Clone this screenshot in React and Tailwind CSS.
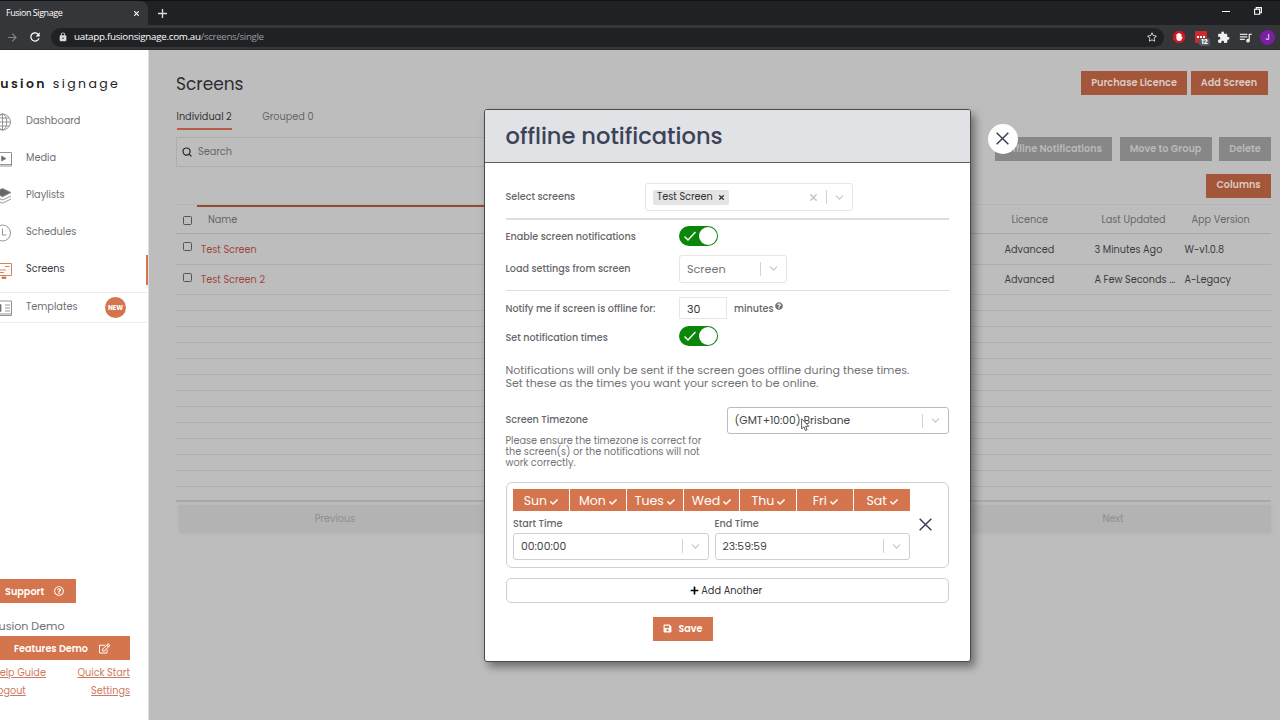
import React from 'react';
import { ChevronDown } from 'lucide-react';
import { FaCheck, FaPlus, FaQuestionCircle, FaRegEdit, FaRegQuestionCircle, FaRegStar, FaSave } from 'react-icons/fa';
import { MdArrowForward, MdExtension, MdLock, MdQueueMusic, MdRefresh } from 'react-icons/md';

const NAV = [
  { label: 'Dashboard', icon: 'globe' },
  { label: 'Media', icon: 'media' },
  { label: 'Playlists', icon: 'layers' },
  { label: 'Schedules', icon: 'clock' },
  { label: 'Screens', icon: 'screen', active: true },
];

const DAYS = ['Sun', 'Mon', 'Tues', 'Wed', 'Thu', 'Fri', 'Sat'];

const ROWS = [
  { name: 'Test Screen', licence: 'Advanced', updated: '3 Minutes Ago', version: 'W-v1.0.8' },
  { name: 'Test Screen 2', licence: 'Advanced', updated: 'A Few Seconds ...', version: 'A-Legacy' },
];

const Cross = ({ className = '', width = 1.5 }) => (
  <svg className={className} viewBox="0 0 14 14" fill="none" stroke="currentColor" strokeWidth={width}>
    <path d="M.7.7l12.6 12.6M13.3.7L.7 13.3" />
  </svg>
);

const NavIcon = ({ name }) => (
  <svg className="w-[19px] h-[18px] shrink-0" viewBox="0 0 19 18" fill="none" stroke="#8a8a8f" strokeWidth="0.9">
    {name === 'globe' && (
      <>
        <circle cx="9.5" cy="9" r="8" />
        <ellipse cx="9.5" cy="9" rx="4.2" ry="8" />
        <path d="M9.5 1v16M3 5h13M3 13h13M1.5 9h16" />
      </>
    )}
    {name === 'media' && (
      <>
        <path d="M.5 2.5h18v12H.5zM1.5 16h17.2V4" />
        <path d="M8.5 6v5L13 8.500z" fill="#66666c" />
      </>
    )}
    {name === 'layers' && (
      <>
        <path d="M9.5 1.5l8.5 4-8.5 4.3L1 5.5z" fill="#66666c" />
        <path d="M1 9l8.5 4L18 9M1 12l8.5 4.2L18 12" />
      </>
    )}
    {name === 'clock' && (
      <>
        <circle cx="9.5" cy="9" r="8" />
        <path d="M9.5 4.5V11h4" />
      </>
    )}
    {name === 'screen' && (
      <g stroke="#d4754d">
        <path d="M.5 2.5h18v12H.5zM12 5.5h4.5M4 9h9M4 11.5h7" />
        <path d="M9 16h4v1.5H9z" fill="#d4754d" />
      </g>
    )}
    {name === 'templates' && (
      <>
        <path d="M.5 2h18v13H.5zM1.5 16.5h17.2V4M12 6h5M12 9h5M12 12h5" />
        <path d="M4 5.5h4v7H4z" fill="#55555b" />
      </>
    )}
  </svg>
);

const BrowserBar = () => (
  <header className="h-[50px] shrink-0 bg-[#35363a] border-b border-[#2a2b2e] text-white">
    <div className="h-[25px] flex items-center bg-[#202124] border-t border-[#101113]">
      <div className="h-full w-[148px] flex items-center justify-between bg-[#35363a] rounded-tr-lg pl-1.5 pr-[9px]">
        <span className="text-[9px] font-['Open_Sans',sans-serif] tracking-[-0.45px]">Fusion Signage</span>
        <Cross className="w-[5px] h-[5px]" width={3.2} />
      </div>
      <svg className="w-[9px] h-[9px] ml-[10px]" viewBox="0 0 8 8" stroke="#dcdcdc" strokeWidth="1.2"><path d="M4 0v8M0 4h8" /></svg>
      <div className="ml-auto mr-[18px] flex items-center gap-[24px] mb-[4px]">
        <svg className="w-2 h-2" viewBox="0 0 8 8" stroke="#fff"><path d="M0 4.5h8" /></svg>
        <svg className="w-2 h-2" viewBox="0 0 8 8" fill="none" stroke="#fff" strokeWidth="1.1"><path d="M.6 2.2h5v5h-5zM2.2 2V.6h5.2v5.2H6" /></svg>
      </div>
    </div>
    <div className="h-6 flex items-center">
      <MdArrowForward className="ml-[6px] w-[13px] h-[13px] text-[#85868a]" />
      <MdRefresh className="ml-[9px] w-[14px] h-[14px]" />
      <div className="ml-[9px] w-[1113px] h-[19px] rounded-full bg-[#202124] flex items-center pl-[7px] pr-[7px]">
        <MdLock className="w-[10px] h-[10px] text-[#dadada]" />
        <span className="ml-[6px] text-[9.8px] font-['Open_Sans',sans-serif] tracking-[-0.28px]">
          uatapp.fusionsignage.com.au<span className="text-[#9a9ba0] tracking-[-0.38px]">/screens/single</span>
        </span>
        <FaRegStar className="ml-auto w-[10px] h-[10px] text-[#dadada]" />
      </div>
      <svg className="ml-[9px] w-3 h-3" viewBox="0 0 12 12">
        <path d="M3.5 0h5L12 3.5v5L8.5 12h-5L0 8.5v-5z" fill="#d3161d" />
        <path d="M3.4 3.2h1V2.5h1V2h1.100v.5h1v.7h1v3l.6-.5.6.5L8 9.800H4.600L3.400 8z" fill="#fff" />
      </svg>
      <div className="relative ml-[10px] w-3 h-3 rounded-[1px] bg-[#cb2b2b] flex justify-center items-center gap-px">
        <i className="size-[2px] bg-white" /><i className="size-[2px] bg-white" /><i className="size-[2px] bg-white" />
        <span className="absolute left-1 top-[7px] w-[11px] h-2 rounded-[2px] bg-[#55585d] text-[7px] leading-2 font-bold text-center">12</span>
      </div>
      <MdExtension className="ml-[10px] w-[13px] h-[13px] text-[#f0f0f0]" />
      <MdQueueMusic className="ml-[8px] w-[15px] h-[15px] text-[#e6e6e6]" />
      <div className="ml-[7px] w-[15px] h-[15px] shrink-0 rounded-full bg-[#7b1fa2] text-[8px] leading-[15px] text-center">J</div>
    </div>
  </header>
);

const Sidebar = () => (
  <aside className="w-[149px] shrink-0 overflow-hidden border-r border-[#dedede] bg-white text-[#6f6f73] text-[9.75px]">
    <div className="h-[53px] pt-[21px] -ml-[6.5px] leading-[25px] text-[12.5px] tracking-[2.4px] text-[#222] whitespace-nowrap">
      <b className="font-semibold">fusion</b> signage
    </div>
    <nav className="flex flex-col">
      {NAV.map((item) => (
        <a key={item.label} className="h-[37px] flex items-center">
          <span className="-ml-[7px] mr-[14px]"><NavIcon name={item.icon} /></span>
          <span className={item.active ? 'pb-px text-[#3a3a42]' : 'pb-px'}>{item.label}</span>
          {item.active && <i className="ml-auto w-[2px] h-[30px] bg-[#d4754d]" />}
        </a>
      ))}
      <a className="mt-[4px] mr-px h-[31px] flex items-center border-y border-[#ececec]">
        <span className="-ml-[7px] mr-[14px]"><NavIcon name="templates" /></span>
        <span>Templates</span>
        <span className="ml-auto mr-[21px] size-[21px] rounded-full bg-[#d4754d] text-white text-[6.5px] leading-[21px] text-center font-bold">NEW</span>
      </a>
    </nav>
    <div className="mt-[256px] w-[76px] h-6 bg-[#d4754d] text-white font-semibold flex items-center pl-[5px] text-[9.7px]">
      <span className="pt-[2px]">Support</span> <FaRegQuestionCircle className="ml-auto mr-3 w-[10px] h-[10px]" />
    </div>
    <div className="mt-[13px] h-5 leading-[21px] -ml-[7px] text-[11.1px] whitespace-nowrap">Fusion Demo</div>
    <div className="w-[130px] h-6 bg-[#d4754d] text-white font-semibold flex items-center pl-[14px] text-[9.6px]">
      <span className="pt-[2px]">Features Demo</span> <FaRegEdit className="ml-auto mr-[20px] w-[11px] h-[11px]" />
    </div>
    <div className="mt-[4px] w-[137px] -ml-[7px] flex flex-col text-[#cd7a60] text-[9.7px] leading-[18px] underline">
      <div className="flex justify-between"><a>Help Guide</a><a>Quick Start</a></div>
      <div className="flex justify-between"><a>Logout</a><a>Settings</a></div>
    </div>
  </aside>
);

const Screens = () => (
  <main className="grow bg-[#bdbdbd] pl-[27px] pr-[9px] pt-5 text-[9.7px] text-[#66666a]">
    <div className="h-[25px] pr-[3.5px] flex items-center text-[9.7px] text-[#dcc9c1] font-semibold">
      <h1 className="mr-auto pt-[4px] text-[17px] font-normal text-[#2c2c33]">Screens</h1>
      <button className="w-[106px] h-6 pt-px bg-[#a3563a]">Purchase Licence</button>
      <button className="ml-[3.5px] w-[77px] h-6 pt-px bg-[#a3563a]">Add Screen</button>
    </div>
    <div className="mt-[12px] h-[23px] flex gap-[30.5px] leading-[19px] pl-[0.5px]">
      <span className="border-b-2 border-[#b85f41] text-[#333338]">Individual 2</span>
      <span>Grouped 0</span>
    </div>
    <div className="mt-[7px] h-[30px] flex items-start gap-2">
      <div className="w-[600px] h-[30px] border border-[#adadad] flex items-center pl-[5px]">
        <svg className="w-[10px] h-[10px] mr-[6px]" viewBox="0 0 11 11" fill="none" stroke="#222" strokeWidth="1.3"><circle cx="5" cy="5" r="3.9" /><path d="M8 8l2.4 2.4" /></svg>
        Search
      </div>
      <div className="ml-auto flex gap-[7.5px] text-[9.7px] font-semibold text-[#b9b9b9]">
        <button className="w-[117px] h-6 pt-px bg-[#878787]">Offline Notifications</button>
        <button className="w-[92px] h-6 pt-px bg-[#878787]">Move to Group</button>
        <button className="w-[52px] h-6 pt-px bg-[#878787]">Delete</button>
      </div>
    </div>
    <div className="mt-[6.5px] flex justify-end">
      <button className="w-[65px] h-6 bg-[#a3563a] text-[9.6px] text-[#dcc9c1] font-semibold">Columns</button>
    </div>
    <section className="mt-[6.5px] border-t border-[#b5b5b5]">
      <div className="ml-[21px] mr-[480px] h-[2px] bg-[#934a32]" />
      <div className="h-[27px] flex items-center border-b border-[#a6a6a6]">
        <i className="ml-[7px] size-[9px] rounded-[1.5px] border border-[#555]" />
        <span className="ml-[16px] w-[803.5px]">Name</span>
        <span className="w-[90px]">Licence</span>
        <span className="w-[90px]">Last Updated</span>
        <span>App Version</span>
      </div>
      {ROWS.map((row) => (
        <div key={row.name} className="h-[30.5px] flex items-center border-b border-[#adadad] text-[#3c3c42]">
          <i className="ml-[7px] mb-[4px] size-[9px] rounded-[1.5px] border border-[#555]" />
          <span className="pt-[3px] ml-[9px] w-[803.5px] text-[#a0483c]">{row.name}</span>
          <span className="pt-[3px] w-[90px]">{row.licence}</span>
          <span className="pt-[3px] w-[90px] whitespace-nowrap">{row.updated}</span>
          <span className="pt-[3px]">{row.version}</span>
        </div>
      ))}
      {Array.from({ length: 12 }).map((_, i) => (
        <div key={i} className="h-4 border-b border-[#adadad]" />
      ))}
      <div className="h-[15px] border-b-2 border-[#a9a9a9]" />
      <div className="mt-[3px] flex justify-between text-[#8e8e8e] text-center leading-[28px]">
        <span className="ml-[3px] w-[312px] h-7 bg-[#b3b3b3] shadow-[0_0_4px_#b3b3b3]">Previous</span>
        <span className="w-[316px] h-7 bg-[#b3b3b3] shadow-[0_0_4px_#b3b3b3]">Next</span>
      </div>
    </section>
  </main>
);

const Select = ({ className = '', children, clearable }) => (
  <div className={`flex items-center rounded-[3px] border bg-white ${className}`}>
    {children}
    {clearable && <Cross className="ml-auto mr-[9px] w-[7px] h-[7px] text-[#c4c4c4]" width={3} />}
    <i className={`${clearable ? '' : 'ml-auto'} w-px h-[14px] bg-[#d3d3d3]`} />
    <ChevronDown className="mx-[6px] w-[13px] h-[13px] text-[#c4c4c4]" />
  </div>
);

const Toggle = () => (
  <div className="w-[39px] h-5 rounded-full bg-[#0a860a] p-px flex items-center">
    <svg className="ml-1 w-[12px] h-[10px]" viewBox="0 0 12 10" fill="none" stroke="#fff" strokeWidth="1.4"><path d="M.5 5.5L4 9l7.5-8" /></svg>
    <i className="ml-auto size-[18px] rounded-full bg-white" />
  </div>
);

const Label = ({ className = '', children }) => (
  <span className={`text-[9.6px] font-medium text-[#66666a] ${className}`}>{children}</span>
);

const NotificationsModal = () => (
  <div className="absolute left-[484px] top-[109px] w-[487px] h-[553px] flex flex-col rounded-[3px] border border-[#4a4a4e] bg-white text-[#737377] shadow-[4px_5px_8px_rgba(0,0,0,0.42)]">
    <h2 className="h-[53px] shrink-0 rounded-t-[2px] pl-[20.5px] leading-[52px] border-b border-[#5c5f66] bg-[#e0e2e6] text-[22.6px] font-medium text-[#3b4358]">offline notifications</h2>
    <div className="pl-[20.5px] pr-[21px] flex flex-col">
      <div className="mt-5 h-7 flex items-center">
        <Label className="w-[139.5px]">Select screens</Label>
        <Select clearable className="w-[208px] h-7 border-[#e6e6e6]">
          <span className="ml-[7px] w-[76px] h-[15px] rounded-[2px] bg-[#e4e4e4] flex items-center pl-[4px] pt-px text-[9.7px] text-[#333]">
            Test Screen <Cross className="ml-auto mr-[5px] w-[5px] h-[5px]" width={3.5} />
          </span>
        </Select>
      </div>
      <hr className="mt-[7px] border-0 h-[1.5px] bg-[#dcdcdc]" />
      <div className="mt-[6px] h-5 flex items-center">
        <Label className="w-[173.5px] pt-[4px]">Enable screen notifications</Label>
        <Toggle />
      </div>
      <div className="mt-[9px] h-7 flex items-center">
        <Label className="w-[173.5px] pt-px">Load settings from screen</Label>
        <Select className="w-[108px] h-7 border-[#e6e6e6]"><span className="pl-[7px] pt-px text-[11.2px]">Screen</span></Select>
      </div>
      <hr className="mt-[7px] border-0 h-[1.5px] bg-[#dcdcdc]" />
      <div className="mt-[6px] h-[22px] flex items-center">
        <Label className="w-[173.5px] pt-[2px]">Notify me if screen is offline for:</Label>
        <span className="w-[48px] h-[22px] border border-[#e6e6e6] pl-[7px] leading-[22px] text-[11px] text-[#333]">30</span>
        <Label className="ml-[7px] pt-[2px]">minutes</Label>
        <FaQuestionCircle className="ml-px mb-[5px] w-[8px] h-[8px]" />
      </div>
      <div className="mt-[7px] h-5 flex items-center">
        <Label className="w-[173.5px] pt-[4px]">Set notification times</Label>
        <Toggle />
      </div>
      <p className="mt-[18px] mb-px text-[11.04px] leading-[12.5px] whitespace-nowrap">
        Notifications will only be sent if the screen goes offline during these times.<br />
        Set these as the times you want your screen to be online.
      </p>
      <div className="mt-[17px] h-[27px] flex items-center justify-between">
        <Label>Screen Timezone</Label>
        <Select className="w-[222px] h-[27px] border-[#bcbcbc]"><span className="pl-[6.5px] pt-px text-[10.7px] text-[#444]">(GMT+10:00) Brisbane</span></Select>
      </div>
      <p className="mt-[1px] text-[9.7px] leading-[11.2px] whitespace-nowrap">
        Please ensure the timezone is correct for<br />
        the screen(s) or the notifications will not<br />
        work correctly.
      </p>
      <div className="mt-[13px] h-[86px] flex rounded-md border border-[#d0d0d4] pl-[6.5px] pt-[6px]">
        <div className="w-[397px]">
          <div className="flex gap-px">
            {DAYS.map((day) => (
              <span key={day} className="flex-1 h-[22px] pt-[3px] bg-[#d4754d] text-white text-[12.5px] flex items-center justify-center gap-[3px]">
                {day} <FaCheck className="mt-[1px] w-2 h-2" />
              </span>
            ))}
          </div>
          <div className="flex gap-[6px]">
            {[['Start Time', '00:00:00'], ['End Time', '23:59:59']].map(([label, value]) => (
              <div key={label} className="flex-1">
                <div className="h-[22px] leading-[21px]"><Label>{label}</Label></div>
                <Select className="h-[27px] border-[#cfcfcf]"><span className="pl-[7px] pt-px text-[10.8px] text-[#444]">{value}</span></Select>
              </div>
            ))}
          </div>
        </div>
        <Cross className="ml-[9px] mt-[29px] w-[13px] h-[13px] text-[#333a4c]" />
      </div>
      <button className="mt-[10px] h-[25px] flex items-center justify-center gap-[2px] rounded-[5px] border border-[#d0d0d4] pr-[2px] text-[9.75px] text-[#333]">
        <FaPlus className="w-[9px] h-[9px] text-black" /> <span className="pt-[2px]">Add Another</span>
      </button>
      <button className="mt-[14px] ml-[147.5px] w-[60px] h-6 flex items-center justify-center gap-[6px] bg-[#d4754d] text-white text-[9.6px] font-semibold">
        <FaSave className="w-[9px] h-[9px]" /> <span className="pt-[2px]">Save</span>
      </button>
    </div>
  </div>
);

const App = () => (
  <div className="relative w-[1280px] h-[720px] overflow-hidden flex flex-col font-[Poppins,Inter,sans-serif]">
    <BrowserBar />
    <div className="grow flex">
      <Sidebar />
      <Screens />
    </div>
    <NotificationsModal />
    <button className="absolute left-[987.5px] top-[123.5px] size-[30px] rounded-full bg-white flex items-center justify-center">
      <Cross className="w-[13px] h-[13px] text-[#333a4c]" />
    </button>
    <svg className="absolute left-[801px] top-[418px] w-[9px] h-[14px]" viewBox="0 0 9 14" fill="#fff" stroke="#333" strokeWidth="0.8">
      <path d="M.6.8v10l2.3-2 1.5 3.7 1.7-.7-1.5-3.5h3.2z" />
    </svg>
  </div>
);

export default App;
